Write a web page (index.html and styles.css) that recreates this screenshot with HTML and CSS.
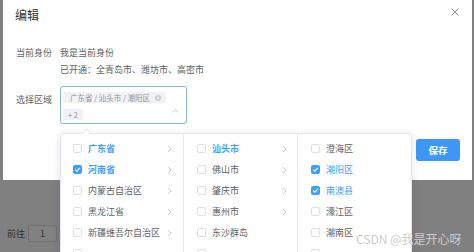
FILE: index.html
```html
<!DOCTYPE html>
<html lang="zh">
<head>
<meta charset="utf-8">
<link rel="stylesheet" href="styles.css">
</head>
<body>
<div class="dialog">
  <div class="header">
    <span class="title">编辑</span>
    <svg class="close" width="8" height="8" viewBox="0 0 8 8"><path d="M0.5 0.5 L7.5 7.5 M7.5 0.5 L0.5 7.5" stroke="#909399" stroke-width="1" fill="none"/></svg>
  </div>
  <div class="body">
    <div class="row">
      <div class="label">当前身份</div>
      <div class="content">
        <div>我是当前身份</div>
        <div>已开通：全青岛市、潍坊市、高密市</div>
      </div>
    </div>
    <div class="row row-select">
      <div class="label label-select">选择区域</div>
      <div class="select">
        <div class="tags">
          <span class="tag">广东省 / 汕头市 / 潮阳区<span class="tag-close"><svg width="6" height="6" viewBox="0 0 6 6"><path d="M1.8 1.8 L4.2 4.2 M4.2 1.8 L1.8 4.2" stroke="#fff" stroke-width="0.8"/></svg></span></span>
          <span class="tag tag-more">+&nbsp;2</span>
        </div>
        <svg class="caret" width="7" height="4" viewBox="0 0 7 4"><polyline points="0.5,3.5 3.5,0.5 6.5,3.5" fill="none" stroke="#c0c4cc" stroke-width="0.9"/></svg>
      </div>
    </div>
  </div>
  <div class="footer">
    <button class="save">保存</button>
  </div>
</div>

<div class="pager">
  <span class="goto">前往</span>
  <span class="pager-input">1</span>
</div>

<div class="panel">
  <span class="panel-arrow"></span>
  <ul class="menu menu-1">
    <li class="item active"><span class="cb"></span><span class="txt">广东省</span><svg class="chev" width="5" height="8" viewBox="0 0 5 8"><polyline points="1,1 4,4 1,7" fill="none" stroke="#c0c4cc" stroke-width="0.9"/></svg></li>
    <li class="item active"><span class="cb checked"><svg width="9" height="9" viewBox="0 0 9 9"><polyline points="2.2,4.6 3.9,6.2 6.9,2.9" fill="none" stroke="#fff" stroke-width="1.1"/></svg></span><span class="txt">河南省</span><svg class="chev" width="5" height="8" viewBox="0 0 5 8"><polyline points="1,1 4,4 1,7" fill="none" stroke="#c0c4cc" stroke-width="0.9"/></svg></li>
    <li class="item"><span class="cb"></span><span class="txt">内蒙古自治区</span><svg class="chev" width="5" height="8" viewBox="0 0 5 8"><polyline points="1,1 4,4 1,7" fill="none" stroke="#c0c4cc" stroke-width="0.9"/></svg></li>
    <li class="item"><span class="cb"></span><span class="txt">黑龙江省</span><svg class="chev" width="5" height="8" viewBox="0 0 5 8"><polyline points="1,1 4,4 1,7" fill="none" stroke="#c0c4cc" stroke-width="0.9"/></svg></li>
    <li class="item"><span class="cb"></span><span class="txt">新疆维吾尔自治区</span><svg class="chev" width="5" height="8" viewBox="0 0 5 8"><polyline points="1,1 4,4 1,7" fill="none" stroke="#c0c4cc" stroke-width="0.9"/></svg></li>
    <li class="item"><span class="cb"></span></li>
  </ul>
  <ul class="menu menu-2">
    <li class="item active"><span class="cb"></span><span class="txt">汕头市</span><svg class="chev" width="5" height="8" viewBox="0 0 5 8"><polyline points="1,1 4,4 1,7" fill="none" stroke="#c0c4cc" stroke-width="0.9"/></svg></li>
    <li class="item"><span class="cb"></span><span class="txt">佛山市</span><svg class="chev" width="5" height="8" viewBox="0 0 5 8"><polyline points="1,1 4,4 1,7" fill="none" stroke="#c0c4cc" stroke-width="0.9"/></svg></li>
    <li class="item"><span class="cb"></span><span class="txt">肇庆市</span><svg class="chev" width="5" height="8" viewBox="0 0 5 8"><polyline points="1,1 4,4 1,7" fill="none" stroke="#c0c4cc" stroke-width="0.9"/></svg></li>
    <li class="item"><span class="cb"></span><span class="txt">惠州市</span><svg class="chev" width="5" height="8" viewBox="0 0 5 8"><polyline points="1,1 4,4 1,7" fill="none" stroke="#c0c4cc" stroke-width="0.9"/></svg></li>
    <li class="item"><span class="cb"></span><span class="txt">东沙群岛</span></li>
    <li class="item"><span class="cb"></span></li>
  </ul>
  <ul class="menu menu-3">
    <li class="item"><span class="cb"></span><span class="txt">澄海区</span></li>
    <li class="item checked-item"><span class="cb checked"><svg width="9" height="9" viewBox="0 0 9 9"><polyline points="2.2,4.6 3.9,6.2 6.9,2.9" fill="none" stroke="#fff" stroke-width="1.1"/></svg></span><span class="txt">潮阳区</span></li>
    <li class="item checked-item"><span class="cb checked"><svg width="9" height="9" viewBox="0 0 9 9"><polyline points="2.2,4.6 3.9,6.2 6.9,2.9" fill="none" stroke="#fff" stroke-width="1.1"/></svg></span><span class="txt">南澳县</span></li>
    <li class="item"><span class="cb"></span><span class="txt">濠江区</span></li>
    <li class="item"><span class="cb"></span><span class="txt">潮南区</span></li>
    <li class="item"><span class="cb"></span></li>
  </ul>
</div>

<div class="watermark">CSDN @我是开心呀</div>
</body>
</html>
```
FILE: styles.css
```css
html, body {
  margin: 0;
  padding: 0;
}
body {
  width: 474px;
  height: 252px;
  overflow: hidden;
  background: #808080;
  font-family: "Noto Sans CJK SC", "Noto Sans", sans-serif;
  font-size: 9px;
  color: #606266;
  position: relative;
}
.dialog {
  margin-left: 3px;
  width: 469px;
  height: 180px;
  background: #fff;
  display: flex;
  flex-direction: column;
}
.header {
  display: flex;
  justify-content: space-between;
  align-items: flex-start;
  height: 30px;
  box-sizing: border-box;
  padding: 8px 13px 0 12px;
}
.title {
  font-size: 12px;
  line-height: 14px;
  color: #303133;
}
.body {
  padding: 14px 0 0 13px;
}
.row {
  display: flex;
}
.label {
  width: 44px;
  line-height: 17px;
  color: #606266;
}
.content {
  line-height: 17px;
}
.row-select {
  margin-top: 8px;
}
.label-select {
  line-height: 28px;
}
.select {
  width: 127px;
  height: 38px;
  box-sizing: border-box;
  border: 1px solid #86b8d6;
  border-radius: 3px;
  display: flex;
  justify-content: space-between;
  padding: 5px 7px 0 2px;
}
.tags {
  display: flex;
  flex-direction: column;
  align-items: flex-start;
  gap: 6px;
}
.tag {
  display: flex;
  align-items: center;
  height: 11px;
  padding: 0 5px 0 7px;
  background: #f0f2f5;
  border-radius: 2px;
  color: #909399;
  font-size: 7.5px;
  line-height: 11px;
  white-space: nowrap;
}
.tag-close {
  display: inline-flex;
  width: 6px;
  height: 6px;
  border-radius: 50%;
  background: #c8ccd3;
  margin-left: 5px;
}
.tag-more {
  padding: 0 5px 0 5px;
}
.caret {
  margin-top: 17px;
}
.footer {
  display: flex;
  justify-content: flex-end;
  padding: 15px 12px 0 0;
}
.save {
  width: 44px;
  height: 22px;
  border: none;
  border-radius: 3px;
  background: #3d97f7;
  color: #fff;
  font-family: "Noto Sans CJK SC", sans-serif;
  font-size: 9.5px;
  font-weight: 700;
  padding: 0;
}
.pager {
  display: flex;
  align-items: center;
  margin-top: 45px;
  padding-left: 7px;
  height: 17px;
  gap: 3px;
}
.goto {
  color: #303133;
  font-size: 9px;
}
.pager-input {
  width: 29px;
  height: 17px;
  box-sizing: border-box;
  border: 1px solid #6f7072;
  border-radius: 2px;
  background: #828282;
  color: #303133;
  text-align: center;
  line-height: 15px;
  font-size: 9px;
}
.panel {
  position: absolute;
  left: 60px;
  top: 133px;
  width: 352px;
  height: 130px;
  box-sizing: border-box;
  background: #fff;
  border: 1px solid #e4e7ed;
  border-radius: 3px;
  box-shadow: 0 2px 8px rgba(0, 0, 0, 0.12);
  display: flex;
}
.panel-arrow {
  position: absolute;
  left: 22px;
  top: -4px;
  width: 6px;
  height: 6px;
  background: #fff;
  border-left: 1px solid #e4e7ed;
  border-top: 1px solid #e4e7ed;
  transform: rotate(45deg);
}
.menu {
  list-style: none;
  margin: 0;
  padding: 4px 0 0 0;
  box-sizing: border-box;
  border-right: 1px solid #e4e7ed;
}
.menu-1 {
  width: 123px;
}
.menu-2 {
  width: 114px;
}
.menu-3 {
  width: 113px;
  border-right: none;
}
.item {
  display: flex;
  align-items: center;
  height: 21px;
  padding: 0 11px 0 12px;
}
.menu-2 .item {
  padding-left: 13px;
  padding-right: 10px;
}
.menu-3 .item {
  padding-left: 13px;
}
.cb {
  width: 9px;
  height: 9px;
  box-sizing: border-box;
  border: 1px solid #dcdfe6;
  border-radius: 2px;
  background: #fff;
  flex: none;
  display: flex;
}
.cb.checked {
  border: none;
  background: #409eff;
}
.txt {
  margin-left: 6px;
  flex: 1;
  white-space: nowrap;
  line-height: 21px;
}
.item.active .txt {
  color: #409eff;
  font-weight: 700;
}
.checked-item .txt {
  color: #409eff;
}
.chev {
  flex: none;
}
.watermark {
  position: absolute;
  left: 356px;
  top: 231px;
  font-family: "Noto Sans CJK SC", "Noto Sans", sans-serif;
  font-size: 12px;
  line-height: 16px;
  color: #cdcdcd;
  white-space: nowrap;
}
```
